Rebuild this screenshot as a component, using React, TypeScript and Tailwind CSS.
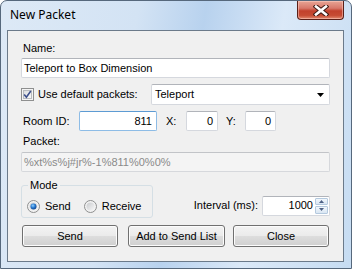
import React from "react";

function TextBox({
  value,
  className = "",
  align = "left",
  focused = false,
  disabled = false,
}: {
  value: string;
  className?: string;
  align?: "left" | "right";
  focused?: boolean;
  disabled?: boolean;
}) {
  const border = focused
    ? "border-[#8dbce6] border-t-[#5d9bd3]"
    : disabled
      ? "border-[#d6d8dc] border-t-[#c2c4c8]"
      : "border-[#d5d8de] border-t-[#b1b4ba]";
  return (
    <div
      className={`flex h-[20px] items-center rounded-[2px] border ${border} ${
        disabled ? "bg-[#f4f4f4] text-[#8a8a8a]" : "bg-white text-black"
      } ${align === "right" ? "justify-end pr-[4px]" : "pl-[2px]"} ${className}`}
    >
      {value}
    </div>
  );
}

function CheckBox() {
  return (
    <svg width="13" height="13" viewBox="0 0 13 13">
      <defs>
        <linearGradient id="cbg" x1="0" y1="0" x2="1" y2="1">
          <stop offset="0" stopColor="#d9dbdd" />
          <stop offset="1" stopColor="#fbfbfb" />
        </linearGradient>
      </defs>
      <rect x="0.5" y="0.5" width="12" height="12" fill="#f4f4f4" stroke="#8e8f8f" />
      <rect x="2.5" y="2.5" width="8" height="8" fill="url(#cbg)" stroke="#b9bcc0" />
      <path d="M3.2 6.4 L5.4 9.2 L9.8 3" fill="none" stroke="#3c4f8c" strokeWidth="1.6" />
    </svg>
  );
}

function Radio({ checked }: { checked: boolean }) {
  return (
    <svg width="13" height="13" viewBox="0 0 13 13">
      <defs>
        <radialGradient id="rsel" cx="0.4" cy="0.35" r="0.7">
          <stop offset="0" stopColor="#8fd0ff" />
          <stop offset="0.5" stopColor="#2a7ad0" />
          <stop offset="1" stopColor="#0c3f86" />
        </radialGradient>
        <linearGradient id="roff" x1="0" y1="0" x2="1" y2="1">
          <stop offset="0" stopColor="#c9cbce" />
          <stop offset="1" stopColor="#f7f7f7" />
        </linearGradient>
      </defs>
      <circle cx="6.5" cy="6.5" r="6" fill="#f2f2f2" stroke="#8e8f8f" />
      <circle cx="6.5" cy="6.5" r="4" fill="url(#roff)" />
      {checked && <circle cx="6.5" cy="6.5" r="3" fill="url(#rsel)" />}
    </svg>
  );
}

function Button({ label, className = "" }: { label: string; className?: string }) {
  return (
    <div
      className={`flex h-[22px] items-center justify-center rounded-[3px] border border-[#707070] bg-[linear-gradient(#f3f3f3_0%,#ebebeb_48%,#dddddd_52%,#cfcfcf_100%)] shadow-[inset_0_0_0_1px_#fcfcfc] ${className}`}
    >
      {label}
    </div>
  );
}

export default function App() {
  return (
    <div className="h-[269px] w-[352px] bg-white">
      <div className="flex h-[269px] w-[352px] flex-col rounded-t-[7px] border border-[#56687c] bg-[linear-gradient(100deg,#dde9f6_0%,#d3e3f4_35%,#b8d2ee_52%,#c9ddf3_62%,#dbe9f8_72%,#c6dcf2_100%)] font-['Liberation_Sans',Arial,sans-serif] text-[11px] leading-[13px] text-black">
        {/* title bar */}
        <div className="flex h-[29px] shrink-0 items-start">
          <span className="ml-[9px] mt-[6px] font-['Noto_Sans',sans-serif] text-[12px] leading-[16px] text-black">
            New Packet
          </span>
          <div className="ml-auto mr-[7px] flex h-[19px] w-[47px] items-center justify-center rounded-b-[4px] border border-t-0 border-[#5a2018] bg-[linear-gradient(#e8a595_0%,#d8786a_40%,#c2412c_55%,#c64b33_80%,#e28a70_100%)] shadow-[inset_0_0_0_1px_rgba(255,210,200,0.5)]">
            <svg width="16" height="11" viewBox="0 0 16 11">
              <path
                d="M3 1.5 L13 9.5 M13 1.5 L3 9.5"
                stroke="#3d1a14"
                strokeWidth="4.6"
                strokeLinecap="square"
              />
              <path
                d="M3 1.5 L13 9.5 M13 1.5 L3 9.5"
                stroke="#ffffff"
                strokeWidth="2.6"
                strokeLinecap="square"
              />
            </svg>
          </div>
        </div>

        {/* client area */}
        <div className="mb-[6px] ml-[6px] mr-[7px] flex flex-1 flex-col border border-[#6b7a8a] bg-[#f0f0f0]">
          <div className="ml-[15px] mt-[11px] h-[13px]">Name:</div>
          <TextBox value="Teleport to Box Dimension" className="ml-[13px] mt-[3px] w-[309px]" />

          <div className="ml-[13px] mt-[6px] flex h-[21px] w-[309px] items-center">
            <CheckBox />
            <span className="ml-[4px]">Use default packets:</span>
            <div className="ml-auto flex h-[21px] w-[179px] items-center rounded-[2px] border border-[#d5d8de] border-t-[#b1b4ba] bg-white pl-[3px]">
              <span>Teleport</span>
              <svg className="ml-auto mr-[5px]" width="7" height="4" viewBox="0 0 7 4">
                <path d="M0 0 H7 L3.5 4 Z" fill="#000" />
              </svg>
            </div>
          </div>

          <div className="ml-[15px] mt-[6px] flex h-[20px] items-center">
            <span className="w-[56px]">Room ID:</span>
            <TextBox value="811" align="right" focused className="w-[78px]" />
            <span className="ml-[9px] w-[20px]">X:</span>
            <TextBox value="0" align="right" className="w-[32px]" />
            <span className="ml-[8px] w-[19px]">Y:</span>
            <TextBox value="0" align="right" className="w-[31px]" />
          </div>

          <div className="ml-[15px] mt-[4px] h-[13px]">Packet:</div>
          <TextBox
            value="%xt%s%j#jr%-1%811%0%0%"
            disabled
            className="ml-[13px] mt-[4px] w-[309px]"
          />

          <div className="mt-[13px] flex">
            <div className="relative ml-[13px] flex h-[33px] w-[132px] items-center rounded-[3px] border border-[#d5dfe5] pl-[5px] pt-[10px]">
              <span className="absolute -top-[7px] left-[6px] bg-[#f0f0f0] px-[2px]">Mode</span>
              <Radio checked />
              <span className="ml-[5px]">Send</span>
              <div className="ml-[13px] flex items-center">
                <Radio checked={false} />
                <span className="ml-[5px]">Receive</span>
              </div>
            </div>
            <div className="ml-auto mr-[13px] mt-[8px] flex items-center">
              <span className="mr-[4px]">Interval (ms):</span>
              <div className="flex h-[20px] w-[68px] items-center rounded-[2px] border border-[#d5d8de] border-t-[#b1b4ba] bg-white">
                <span className="ml-auto mr-[2px]">1000</span>
                <div className="mr-[1px] flex h-[16px] w-[13px] flex-col gap-[1px]">
                  <div className="flex flex-1 items-center justify-center rounded-[1px] border border-[#b4c9de] bg-[linear-gradient(#f2f7fc,#d9e6f3)]">
                    <svg width="5" height="3" viewBox="0 0 5 3">
                      <path d="M0 3 L2.5 0 L5 3 Z" fill="#4d6185" />
                    </svg>
                  </div>
                  <div className="flex flex-1 items-center justify-center rounded-[1px] border border-[#b4c9de] bg-[linear-gradient(#f2f7fc,#d9e6f3)]">
                    <svg width="5" height="3" viewBox="0 0 5 3">
                      <path d="M0 0 L5 0 L2.5 3 Z" fill="#4d6185" />
                    </svg>
                  </div>
                </div>
              </div>
            </div>
          </div>

          <div className="mt-[7px] flex">
            <Button label="Send" className="ml-[14px] w-[96px]" />
            <Button label="Add to Send List" className="ml-[10px] w-[97px]" />
            <Button label="Close" className="ml-[8px] w-[96px]" />
          </div>
        </div>
      </div>
    </div>
  );
}
